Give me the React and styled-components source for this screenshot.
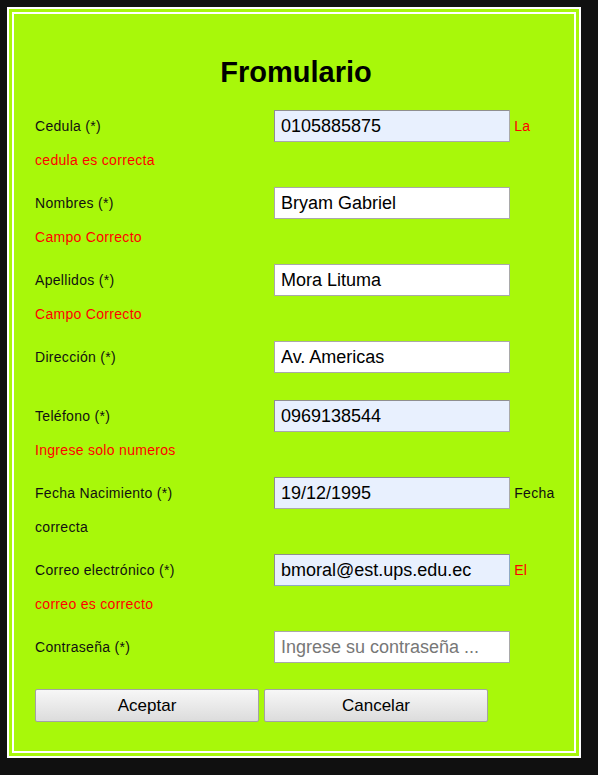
import React from 'react';
import styled, { createGlobalStyle } from 'styled-components';

const GlobalStyle = createGlobalStyle`
  body {
    margin: 7px;
    background: #101010;
    font-family: "Liberation Sans", Arial, sans-serif;
  }
`;

const fields = [
  { label: 'Cedula (*)', value: '0105885875', filled: true, msg: 'La cedula es correcta' },
  { label: 'Nombres (*)', value: 'Bryam Gabriel', msg: 'Campo Correcto' },
  { label: 'Apellidos (*)', value: 'Mora Lituma', msg: 'Campo Correcto' },
  { label: 'Dirección (*)', value: 'Av. Americas' },
  { label: 'Teléfono (*)', value: '0969138544', filled: true, msg: 'Ingrese solo numeros' },
  { label: 'Fecha Nacimiento (*)', value: '19/12/1995', filled: true, msg: 'Fecha correcta', ok: true },
  { label: 'Correo electrónico (*)', value: 'bmoral@est.ups.edu.ec', filled: true, focused: true, msg: 'El correo es correcto' },
  { label: 'Contraseña (*)', placeholder: 'Ingrese su contraseña ...', type: 'password' },
];

const App = () => {
  return (
    <>
      <GlobalStyle />
      <Panel onSubmit={(e) => e.preventDefault()}>
        <Title>Fromulario</Title>
        {fields.map((f) => (
          <Field key={f.label}>
            <Label>{f.label}</Label>
            <Input
              type={f.type || 'text'}
              defaultValue={f.value}
              placeholder={f.placeholder}
              $filled={f.filled}
              $focused={f.focused}
            />{' '}
            {f.msg && <Msg $ok={f.ok}>{f.msg}</Msg>}
          </Field>
        ))}
        <Actions>
          <Button type="submit">Aceptar</Button>
          <Button type="button">Cancelar</Button>
        </Actions>
      </Panel>
    </>
  );
};

export default App;

const Panel = styled.form`
  box-sizing: border-box;
  width: 574px;
  background: #a8f80a;
  border: 7px double #fff;
  padding: 0 17px 29px 21px;
`;

const Title = styled.h1`
  margin: 41px 0 20px;
  font-size: 29px;
  line-height: 34px;
  font-weight: bold;
  text-align: center;
  color: #000;
`;

const Field = styled.div`
  min-height: 50px;
  margin-bottom: 9px;
  font-size: 14px;
  line-height: 34px;
  letter-spacing: 0.3px;
  color: #111;
`;

const Label = styled.label`
  display: inline-block;
  width: 239px;
  vertical-align: top;
`;

const Input = styled.input`
  box-sizing: border-box;
  width: 236px;
  height: 32px;
  margin: 1px 0 0;
  padding: 0 6px;
  vertical-align: top;
  font-family: "Liberation Sans", Arial, sans-serif;
  font-size: 18px;
  letter-spacing: 0;
  color: #000;
  background: ${(p) => (p.$filled ? '#e8f0fe' : '#fff')};
  border: 1px solid ${(p) => (p.$focused ? '#8fa9c4' : '#a9a9a9')};
  border-top-color: ${(p) => (p.$filled ? '#8f8f8f' : '#a9a9a9')};
  border-left-color: ${(p) => (p.$filled ? '#8f8f8f' : '#a9a9a9')};
  border-radius: 0;
  outline: none;

  &::placeholder {
    color: #777;
  }
`;

const Msg = styled.span`
  color: ${(p) => (p.$ok ? '#111' : '#f00')};
`;

const Actions = styled.div`
  display: flex;
  gap: 5px;
`;

const Button = styled.button`
  box-sizing: border-box;
  width: 224px;
  height: 33px;
  padding: 0;
  font-family: "Liberation Sans", Arial, sans-serif;
  font-size: 17px;
  color: #000;
  background: linear-gradient(#f7f7f7, #dcdcdc);
  border: 1px solid #a3a3a3;
  border-radius: 2px;
  cursor: pointer;
`;
